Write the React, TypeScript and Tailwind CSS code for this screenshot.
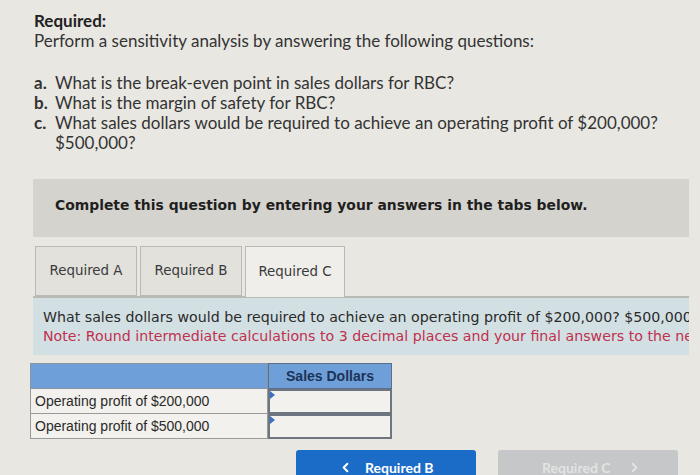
import React from "react";
import { ChevronLeft, ChevronRight } from "lucide-react";

function Tab({ label, active }: { label: string; active?: boolean }) {
  return (
    <div
      className={
        active
          ? "w-[100px] h-[51px] flex items-center justify-center border border-b-0 border-[#b9b9b6] bg-[#efeeea] text-[#3a3a3a] relative z-10 -mb-px"
          : "w-[102px] h-[50px] flex items-center justify-center border border-[#b9b9b6] bg-[#e2e1dc] text-[#3a3a3a]"
      }
      style={{ fontFamily: '"DejaVu Sans", Verdana, sans-serif' }}
    >
      <span className="text-[13.4px]">{label}</span>
    </div>
  );
}

function InputCell() {
  return (
    <div className="relative h-full border-2 border-[#6d7680] bg-[#f2f1ed]">
      <div className="absolute left-0 top-0 w-0 h-0 border-t-[4px] border-b-[4px] border-l-[5px] border-t-transparent border-b-transparent border-l-[#3b6fc4]" />
    </div>
  );
}

export default function App() {
  return (
    <div className="w-[700px] h-[475px] overflow-hidden bg-[#e8e7e2] text-[#2b2b2b] relative">
      <div
        className="pl-[34px] pt-[11px]"
        style={{ fontFamily: 'Lato, "Open Sans", sans-serif' }}
      >
        <div className="text-[17px] leading-[20px] font-bold text-[#222]">Required:</div>
        <div className="text-[17px] leading-[20px] text-[#333]">
          Perform a sensitivity analysis by answering the following questions:
        </div>
        <div className="mt-[22px] text-[17px] leading-[20px] text-[#333]">
          <div className="flex">
            <span className="w-[21px] font-bold">a.</span>
            <span>What is the break-even point in sales dollars for RBC?</span>
          </div>
          <div className="flex">
            <span className="w-[21px] font-bold">b.</span>
            <span>What is the margin of safety for RBC?</span>
          </div>
          <div className="flex">
            <span className="w-[21px] font-bold">c.</span>
            <span>
              What sales dollars would be required to achieve an operating profit of $200,000?
              <br />
              $500,000?
            </span>
          </div>
        </div>
      </div>

      <div className="ml-[33px] w-[656px] mt-[26px] h-[58px] bg-[#d5d3cd] flex items-center pl-[22px] pb-[6px]">
        <span
          className="text-[13.9px] font-bold text-[#1f1f1f]"
          style={{ fontFamily: '"DejaVu Sans", Verdana, sans-serif' }}
        >
          Complete this question by entering your answers in the tabs below.
        </span>
      </div>

      <div className="ml-[35px] mt-[9px] flex items-end gap-[3px]">
        <Tab label="Required A" />
        <Tab label="Required B" />
        <Tab label="Required C" active />
      </div>

      <div
        className="ml-[33px] w-[656px] h-[59px] bg-[#d3e0e3] border-t-2 border-[#b9b9b6] overflow-hidden pl-[10px] pt-[10px] whitespace-nowrap"
        style={{ fontFamily: '"DejaVu Sans", Verdana, sans-serif' }}
      >
        <div className="text-[14.2px] leading-[19px] text-[#2a2a2a]">
          What sales dollars would be required to achieve an operating profit of $200,000? $500,000?
        </div>
        <div className="text-[14.2px] leading-[19px] text-[#c0304f]">
          Note: Round intermediate calculations to 3 decimal places and your final answers to the nearest whole dollar.
        </div>
      </div>

      <div
        className="ml-[30px] mt-[8px] w-[362px] grid grid-cols-[238px_124px] grid-rows-[26px_25px_25px]"
        style={{ fontFamily: '"Liberation Sans", Arial, sans-serif' }}
      >
        <div className="bg-[#6e9fd9] border border-[#8a95a3]" />
        <div className="bg-[#6e9fd9] border border-[#5b6f8c] flex items-center justify-center text-[14px] font-bold text-[#1c3358]">
          Sales Dollars
        </div>
        <div className="bg-[#f2f1ed] border border-t-0 border-[#9a9a9a] flex items-center pl-[4px] text-[14px] text-[#2a2a2a]">
          Operating profit of $200,000
        </div>
        <InputCell />
        <div className="bg-[#f2f1ed] border border-t-0 border-[#9a9a9a] flex items-center pl-[4px] text-[14px] text-[#2a2a2a]">
          Operating profit of $500,000
        </div>
        <InputCell />
      </div>

      <div
        className="absolute left-[296px] top-[450px] flex gap-[22px]"
        style={{ fontFamily: 'Lato, "Open Sans", sans-serif' }}
      >
        <div className="w-[180px] h-[30px] rounded-t-[3px] bg-[#1b6cc7] text-white flex items-start pt-[9px] pl-[42px] gap-[12px] text-[14px] font-bold">
          <ChevronLeft size={15} strokeWidth={3.2} className="mt-[1px]" />
          <span className="leading-[17px]">Required B</span>
        </div>
        <div className="w-[180px] h-[30px] rounded-t-[3px] bg-[#c6c7c8] text-[#e2e3e4] flex items-start pt-[9px] pl-[44px] gap-[16px] text-[14px] font-bold">
          <span className="leading-[17px]">Required C</span>
          <ChevronRight size={15} strokeWidth={3.2} className="mt-[1px]" />
        </div>
      </div>
    </div>
  );
}
